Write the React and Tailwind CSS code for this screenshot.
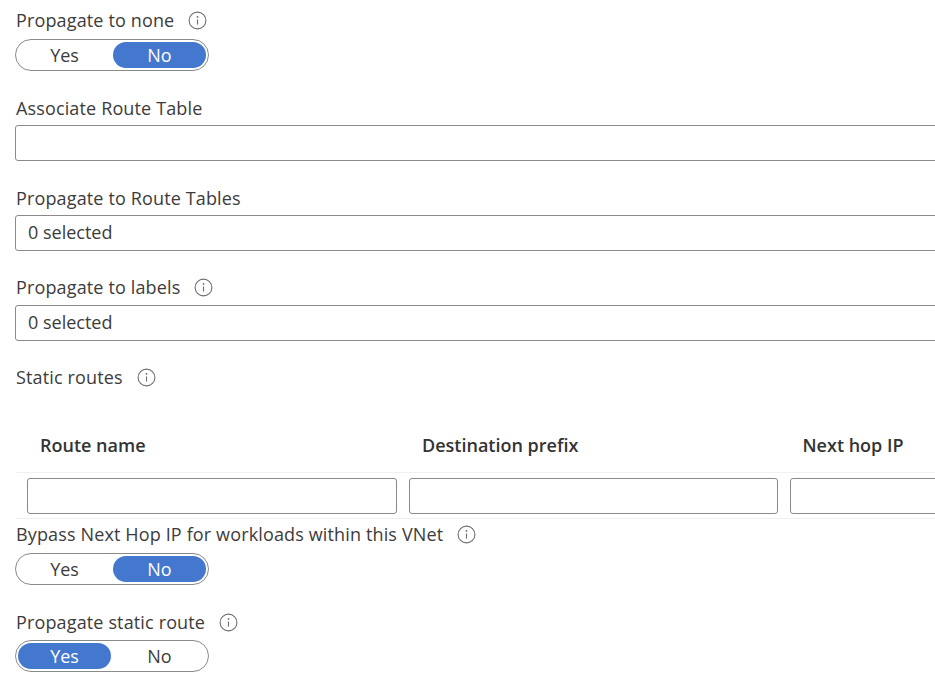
const font = "font-['Open_Sans','Noto_Sans',sans-serif]";

function Info() {
  return (
    <svg width="19" height="19" viewBox="0 0 19 19" className="shrink-0 ml-[14px]" fill="none">
      <circle cx="9.5" cy="9.5" r="8.4" stroke="#6e6e6e" strokeWidth="1.1" />
      <circle cx="9.5" cy="5.9" r="0.9" fill="#6e6e6e" />
      <path d="M9.5 8.4V13.6" stroke="#6e6e6e" strokeWidth="1.1" />
    </svg>
  );
}

function Label({ text, info, className = "" }) {
  return (
    <div className={`flex items-center h-6 pl-4 text-[#3c3c3c] text-[18px] tracking-[0.14px] leading-6 whitespace-nowrap ${className}`}>
      <span>{text}</span>
      {info && <Info />}
    </div>
  );
}

function Toggle({ value, className = "" }) {
  const seg = "w-[93px] h-[26px] rounded-full flex items-center justify-center text-[18px]";
  const on = "bg-[#4477ce] text-white";
  const off = "text-[#3c3c3c]";
  return (
    <div className={`ml-[15px] w-[194px] h-8 rounded-full border border-[#8a8a8a] flex items-center justify-between px-[2px] ${className}`}>
      <div className={`${seg} ${value === "Yes" ? on : off}`}>Yes</div>
      <div className={`${seg} ${value === "No" ? on : off}`}>No</div>
    </div>
  );
}

function Field({ text, className = "" }) {
  return (
    <div className={`ml-[15px] w-[1000px] h-9 border border-[#8a8a8a] rounded-[3px] pl-3 pb-[1px] flex items-center text-[18px] text-[#3c3c3c] ${className}`}>
      {text}
    </div>
  );
}

function Cell({ className = "w-[370px]" }) {
  return <div className={`h-9 shrink-0 border border-[#8a8a8a] rounded-[3px] ${className}`} />;
}

export default function App() {
  return (
    <div className={`${font} w-[935px] h-[681px] overflow-hidden bg-white pt-[8px]`}>
      <Label text="Propagate to none" info />
      <Toggle value="No" className="mt-[7px]" />
      <Label text="Associate Route Table" className="mt-[25px]" />
      <Field className="mt-[5px]" />
      <Label text="Propagate to Route Tables" className="mt-[25px]" />
      <Field text="0 selected" className="mt-[5px]" />
      <Label text="Propagate to labels" info className="mt-[24px]" />
      <Field text="0 selected" className="mt-[6px]" />
      <Label text="Static routes" info className="mt-[24px]" />
      <div className="mt-[44px] ml-[16px] w-[1000px]">
        <div className="flex h-[40px] border-b border-[#f0f0f0] text-[18px] font-semibold text-[#333333] items-center pb-[15px]">
          <div className="pl-[24px] w-[382px]">Route name</div>
          <div className="pl-[24px] w-[380.5px]">Destination prefix</div>
          <div className="pl-[24px]">Next hop IP</div>
        </div>
        <div className="flex gap-3 pl-[11px] pt-[5px] pb-[4px] border-b border-[#f0f0f0]">
          <Cell />
          <Cell className="w-[369px]" />
          <Cell />
        </div>
      </div>
      <Label text="Bypass Next Hop IP for workloads within this VNet" info className="mt-[3px]" />
      <Toggle value="No" className="mt-[7px]" />
      <Label text="Propagate static route" info className="mt-[25px]" />
      <Toggle value="Yes" className="mt-[6px]" />
    </div>
  );
}
